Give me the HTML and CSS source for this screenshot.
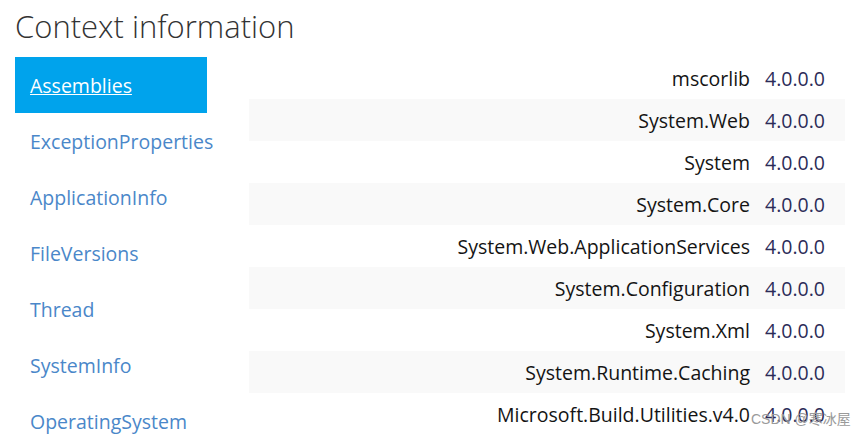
FILE: index.html
```html
<!DOCTYPE html>
<html lang="en">
<head>
    <meta charset="UTF-8">
    <title>Context information</title>
    <link rel="stylesheet" href="styles.css">
</head>
<body>

    <h1 class="title">Context information</h1>

    <div class="layout">
        <ul class="tabs">
            <li class="tab active"><a href="#">Assemblies</a></li>
            <li class="tab"><a href="#">ExceptionProperties</a></li>
            <li class="tab"><a href="#">ApplicationInfo</a></li>
            <li class="tab"><a href="#">FileVersions</a></li>
            <li class="tab"><a href="#">Thread</a></li>
            <li class="tab"><a href="#">SystemInfo</a></li>
            <li class="tab"><a href="#">OperatingSystem</a></li>
        </ul>

        <table class="info">
            <tr><td class="key">mscorlib</td><td class="val">4.0.0.0</td></tr>
            <tr><td class="key">System.Web</td><td class="val">4.0.0.0</td></tr>
            <tr><td class="key">System</td><td class="val">4.0.0.0</td></tr>
            <tr><td class="key">System.Core</td><td class="val">4.0.0.0</td></tr>
            <tr><td class="key">System.Web.ApplicationServices</td><td class="val">4.0.0.0</td></tr>
            <tr><td class="key">System.Configuration</td><td class="val">4.0.0.0</td></tr>
            <tr><td class="key">System.Xml</td><td class="val">4.0.0.0</td></tr>
            <tr><td class="key">System.Runtime.Caching</td><td class="val">4.0.0.0</td></tr>
            <tr><td class="key">Microsoft.Build.Utilities.v4.0</td><td class="val">4.0.0.0</td></tr>
        </table>
    </div>

    <div class="mark">CSDN @寒冰屋</div>

</body>
</html>
```

FILE: styles.css
```css
body {
    margin: 0;
    padding: 0 15px;
    font-family: "Open Sans", "Noto Sans", sans-serif;
    background: #fff;
    color: #222;
    overflow: hidden;
}
.title {
    margin: 0;
    padding-top: 6px;
    font-size: 31px;
    line-height: 40px;
    font-weight: 300;
    color: #333;
}
.layout {
    display: flex;
    align-items: flex-start;
    gap: 42px;
    margin-top: 11px;
}
.tabs {
    list-style: none;
    margin: 0;
    padding: 0;
    width: 192px;
    flex: none;
}
.tab {
    height: 56px;
    display: flex;
    align-items: center;
    padding-left: 15px;
    font-size: 19.5px;
}
.tab a {
    color: #4a87c9;
    text-decoration: none;
}
.tab.active {
    background: #00a3ec;
}
.tab.active a {
    color: #fff;
    text-decoration: underline;
}
.info {
    width: 596px;
    border-collapse: collapse;
    font-size: 19.5px;
}
.info tr {
    height: 42px;
}
.info tr:nth-child(even) {
    background: #f9f9f9;
}
.key {
    text-align: right;
    padding: 0 7px 0 0;
    color: #141414;
}
.val {
    width: 80px;
    padding: 0 0 0 8px;
    color: #2c2c58;
}
.mark {
    position: absolute;
    left: 751px;
    top: 408px;
    font-size: 14px;
    color: #9a9a9a;
    font-family: "Liberation Sans", "Noto Sans CJK SC", sans-serif;
}
```
